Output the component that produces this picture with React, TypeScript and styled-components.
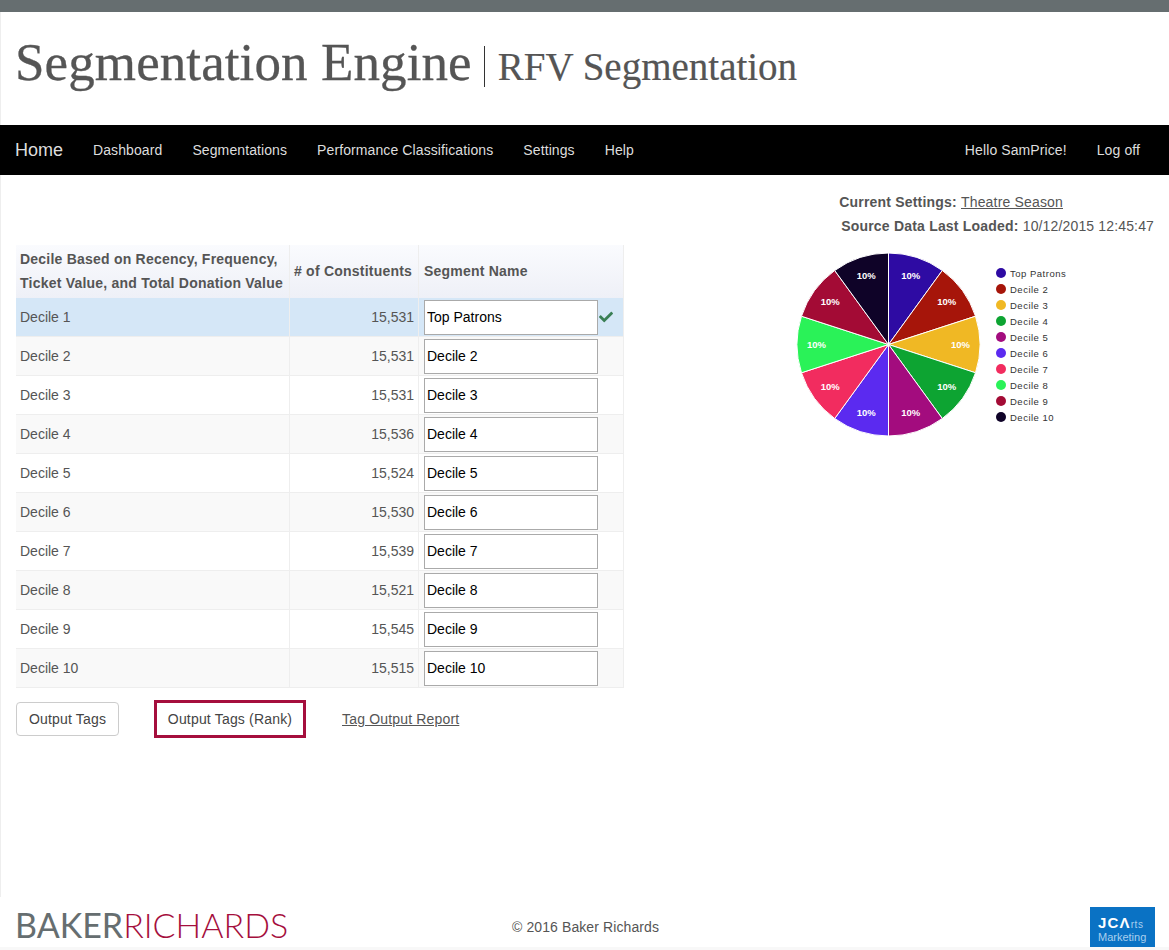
import React from 'react';
import styled, { createGlobalStyle } from 'styled-components';
import { FaCheck } from 'react-icons/fa';

const rows = [
  { decile: 'Decile 1', count: '15,531', name: 'Top Patrons', color: '#2e0ba3' },
  { decile: 'Decile 2', count: '15,531', name: 'Decile 2', color: '#a6150a' },
  { decile: 'Decile 3', count: '15,531', name: 'Decile 3', color: '#f0b824' },
  { decile: 'Decile 4', count: '15,536', name: 'Decile 4', color: '#0da432' },
  { decile: 'Decile 5', count: '15,524', name: 'Decile 5', color: '#a30c7e' },
  { decile: 'Decile 6', count: '15,530', name: 'Decile 6', color: '#5b2af0' },
  { decile: 'Decile 7', count: '15,539', name: 'Decile 7', color: '#f22c5f' },
  { decile: 'Decile 8', count: '15,521', name: 'Decile 8', color: '#2af258' },
  { decile: 'Decile 9', count: '15,545', name: 'Decile 9', color: '#a30b35' },
  { decile: 'Decile 10', count: '15,515', name: 'Decile 10', color: '#0f0328' },
];

const navLinks = ['Dashboard', 'Segmentations', 'Performance Classifications', 'Settings', 'Help'];

const R = 91.5;
const C = 92.5;

const point = (deg: number, radius: number) => {
  const a = ((deg - 90) * Math.PI) / 180;
  return [C + radius * Math.cos(a), C + radius * Math.sin(a)];
};

const Pie = () => (
  <svg width="185" height="185" viewBox="0 0 185 185">
    {rows.map((row, i) => {
      const [x1, y1] = point(i * 36, R);
      const [x2, y2] = point((i + 1) * 36, R);
      return (
        <path
          key={row.decile}
          d={`M${C} ${C}L${x1} ${y1}A${R} ${R} 0 0 1 ${x2} ${y2}Z`}
          fill={row.color}
          stroke="#fff"
          strokeWidth="1"
        />
      );
    })}
    {rows.map((row, i) => {
      const [x, y] = point(i * 36 + 18, 72);
      return (
        <text
          key={row.decile}
          x={x}
          y={y + 3}
          textAnchor="middle"
          fill="#fff"
          fontSize="9.5"
          fontWeight="700"
          fontFamily="'Liberation Sans', Arial, sans-serif"
        >
          10%
        </text>
      );
    })}
  </svg>
);

const App = () => (
  <>
    <GlobalStyle />
    <TopBar />
    <Page>
      <Header>
        <Title>Segmentation Engine</Title>
        <Subtitle>RFV Segmentation</Subtitle>
      </Header>
      <Nav>
        <Brand>Home</Brand>
        {navLinks.map((link) => (
          <NavLink key={link}>{link}</NavLink>
        ))}
        <NavRight>
          <NavLink>Hello SamPrice!</NavLink>
          <NavLink>Log off</NavLink>
        </NavRight>
      </Nav>
      <Main>
        <LeftColumn>
          <Table>
            <colgroup>
              <col width="274" />
              <col width="129" />
              <col width="205" />
            </colgroup>
            <thead>
              <tr>
                <Th>
                  Decile Based on Recency, Frequency,
                  <br />
                  Ticket Value, and Total Donation Value
                </Th>
                <Th># of Constituents</Th>
                <Th>Segment Name</Th>
              </tr>
            </thead>
            <tbody>
              {rows.map((row, i) => (
                <Row key={row.decile} $active={i === 0} $striped={i % 2 === 1}>
                  <Td>{row.decile}</Td>
                  <CountCell>{row.count}</CountCell>
                  <NameCell>
                    <NameWrap>
                      <NameInput defaultValue={row.name} />
                      {i === 0 && (
                        <Saved>
                          <FaCheck size={14} />
                        </Saved>
                      )}
                    </NameWrap>
                  </NameCell>
                </Row>
              ))}
            </tbody>
          </Table>
          <Actions>
            <Button>Output Tags</Button>
            <RankButton>Output Tags (Rank)</RankButton>
            <TextLink href="#">Tag Output Report</TextLink>
          </Actions>
        </LeftColumn>
        <RightColumn>
          <InfoLine $right={106}>
            <b>Current Settings:</b> <TextLink href="#">Theatre Season</TextLink>
          </InfoLine>
          <InfoLine $right={15}>
            <b>Source Data Last Loaded:</b> 10/12/2015 12:45:47
          </InfoLine>
          <Chart>
            <Pie />
            <Legend>
              {rows.map((row) => (
                <LegendItem key={row.decile}>
                  <Dot $color={row.color} />
                  {row.name}
                </LegendItem>
              ))}
            </Legend>
          </Chart>
        </RightColumn>
      </Main>
      <Footer>
        <BakerLogo>
          <span>BAKER</span>
          <em>RICHARDS</em>
        </BakerLogo>
        <Copyright>© 2016 Baker Richards</Copyright>
        <JcaLogo>
          <strong>
            JCΛ<small>rts</small>
          </strong>
          <span>Marketing</span>
        </JcaLogo>
      </Footer>
    </Page>
  </>
);

export default App;

const GlobalStyle = createGlobalStyle`
  html, body {
    margin: 0;
    padding: 0;
    background: #fff;
  }
  body {
    font-family: 'Liberation Sans', Arial, sans-serif;
    font-size: 14px;
    color: #555;
  }
`;

const TopBar = styled.div`
  height: 12px;
  background: #666e70;
`;
const Page = styled.div`
  border-left: 1px solid #eee;
`;
const Header = styled.header`
  display: flex;
  align-items: center;
  box-sizing: border-box;
  height: 113px;
  padding: 0 0 4px 14px;
  background: #fff;
`;
const Title = styled.h1`
  margin: 0;
  padding: 0 12px 8px 0;
  border-right: 1px solid #333;
  font-family: 'Liberation Serif', Georgia, serif;
  font-size: 53px;
  font-weight: 400;
  line-height: 33px;
  letter-spacing: 0.1px;
  color: #555;
  -webkit-text-stroke: 0.3px #555;
`;
const Subtitle = styled.h2`
  margin: 0 0 -1px 13px;
  font-family: 'Liberation Serif', Georgia, serif;
  font-size: 39px;
  font-weight: 400;
  line-height: 42px;
  color: #555;
  -webkit-text-stroke: 0.2px #555;
`;
const Nav = styled.nav`
  display: flex;
  align-items: center;
  height: 50px;
  margin-left: -1px;
  padding: 0 14px 0 15px;
  background: #000;
`;
const Brand = styled.a`
  margin-right: 15px;
  font-size: 18px;
  color: #ddd;
`;
const NavLink = styled.a`
  padding: 0 15px;
  font-size: 14px;
  letter-spacing: 0.1px;
  color: #ddd;
`;
const NavRight = styled.div`
  display: flex;
  margin-left: auto;
`;
const Main = styled.main`
  display: flex;
  justify-content: space-between;
  height: 722px;
`;
const LeftColumn = styled.section`
  width: 608px;
  padding: 70px 0 0 15px;
`;
const Table = styled.table`
  width: 608px;
  border-collapse: separate;
  border-spacing: 0;
  table-layout: fixed;
`;
const Th = styled.th`
  box-sizing: border-box;
  height: 53px;
  padding: 0 4px 2px;
  border-right: 1px solid #eee;
  background: linear-gradient(to bottom, #fafbfe, #eef0f7);
  font-size: 14px;
  font-weight: 700;
  line-height: 24px;
  letter-spacing: 0.22px;
  text-align: left;
  white-space: nowrap;
  color: #555;
  &:last-child {
    padding-left: 5px;
  }
`;
const Row = styled.tr<{ $active: boolean; $striped: boolean }>`
  background: ${(props) =>
    props.$active ? '#d5e7f7' : props.$striped ? '#f9f9f9' : '#fff'};
`;
const Td = styled.td`
  box-sizing: border-box;
  height: 39px;
  padding: 0 4px;
  border-right: 1px solid #eee;
  border-bottom: 1px solid #eee;
  font-size: 14px;
  color: #555;
`;
const CountCell = styled(Td)`
  text-align: right;
`;
const NameCell = styled(Td)`
  padding: 0 0 0 5px;
`;
const NameWrap = styled.div`
  display: flex;
  align-items: center;
`;
const NameInput = styled.input`
  box-sizing: border-box;
  width: 174px;
  height: 35px;
  padding: 0 2px;
  border: 1px solid #aaa;
  border-radius: 0;
  background: #fff;
  font-family: inherit;
  font-size: 14px;
  color: #000;
`;
const Saved = styled.span`
  display: flex;
  margin-left: 1px;
  color: #3a7f55;
`;
const Actions = styled.div`
  display: flex;
  align-items: center;
  margin-top: 12px;
`;
const Button = styled.button`
  box-sizing: border-box;
  width: 103px;
  height: 34px;
  padding: 0;
  border: 1px solid #ccc;
  border-radius: 4px;
  background: #fff;
  font-family: inherit;
  font-size: 14px;
  letter-spacing: 0.18px;
  color: #444;
`;
const RankButton = styled(Button)`
  width: 152px;
  height: 38px;
  margin: 0 36px 0 35px;
  border: 3px solid #a50f3d;
  border-radius: 0;
`;
const TextLink = styled.a`
  font-size: 14px;
  letter-spacing: 0.17px;
  color: #555;
  text-decoration: underline;
`;
const RightColumn = styled.aside`
  width: 400px;
  padding-top: 15px;
`;
const InfoLine = styled.div<{ $right: number }>`
  padding-right: ${(props) => props.$right}px;
  font-size: 14px;
  line-height: 24px;
  letter-spacing: 0.15px;
  text-align: right;
  white-space: nowrap;
  b {
    letter-spacing: 0.2px;
  }
`;
const Chart = styled.div`
  display: flex;
  align-items: flex-start;
  margin: 14px 0 0 27px;
`;
const Legend = styled.ul`
  margin: 13px 0 0 15px;
  padding: 0;
  list-style: none;
`;
const LegendItem = styled.li`
  display: flex;
  align-items: center;
  height: 16px;
  font-size: 9.5px;
  letter-spacing: 0.5px;
  color: #333;
`;
const Dot = styled.span<{ $color: string }>`
  width: 10px;
  height: 10px;
  margin-right: 4px;
  border-radius: 50%;
  background: ${(props) => props.$color};
`;
const Footer = styled.footer`
  display: flex;
  align-items: flex-end;
  height: 50px;
  margin-left: -1px;
  padding: 0 14px 0 15px;
  border-bottom: 3px solid #f8f8f8;
  background: #fff;
`;
const BakerLogo = styled.div`
  width: 272px;
  margin-bottom: 5px;
  font-family: Lato, sans-serif;
  font-size: 34px;
  font-weight: 300;
  line-height: 34px;
  white-space: nowrap;
  span {
    font-weight: 400;
    color: #666e70;
  }
  em {
    font-style: normal;
    color: #a50f3d;
  }
`;
const Copyright = styled.div`
  margin: 0 0 12px 225px;
  font-size: 14px;
  letter-spacing: 0.1px;
  color: #555;
`;
const JcaLogo = styled.div`
  display: flex;
  flex-direction: column;
  justify-content: center;
  box-sizing: border-box;
  width: 65px;
  height: 40px;
  margin-left: auto;
  padding: 2px 0 0 8px;
  background: #0a72c4;
  color: #fff;
  white-space: nowrap;
  strong {
    font-size: 15px;
    font-weight: 700;
    letter-spacing: 1.2px;
  }
  small {
    font-size: 10px;
    font-weight: 400;
    letter-spacing: 0.5px;
    color: #a9cfee;
  }
  span {
    font-size: 11px;
    color: #a9cfee;
  }
`;
